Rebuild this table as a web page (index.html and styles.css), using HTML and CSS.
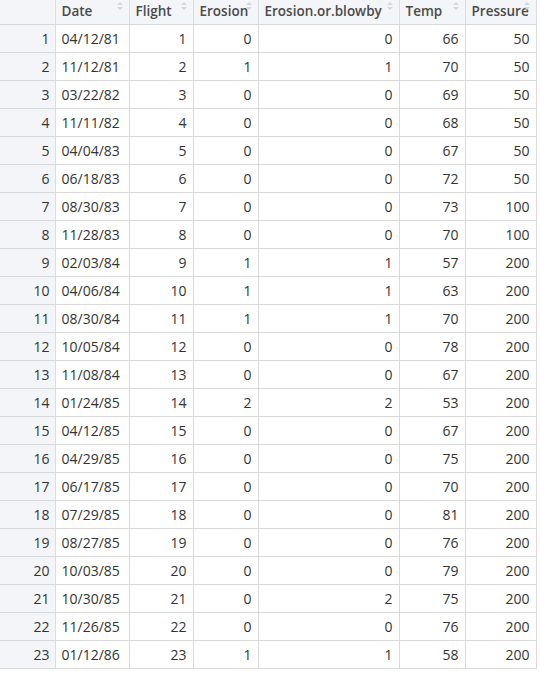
FILE: index.html
```html
<!DOCTYPE html>
<html>
<head>
<meta charset="utf-8">
<link rel="stylesheet" href="styles.css">
</head>
<body>
<table class="grid">
<colgroup>
<col class="c0"><col class="c1"><col class="c2"><col class="c3"><col class="c4"><col class="c5"><col class="c6">
</colgroup>
<thead>
<tr>
<th class="rh"></th>
<th><span class="lbl">Date</span><span class="sort"></span></th>
<th><span class="lbl">Flight</span><span class="sort"></span></th>
<th><span class="lbl">Erosion</span><span class="sort"></span></th>
<th><span class="lbl">Erosion.or.blowby</span><span class="sort"></span></th>
<th><span class="lbl">Temp</span><span class="sort"></span></th>
<th><span class="lbl">Pressure</span><span class="sort"></span></th>
</tr>
</thead>
<tbody id="body">
<tr><td class="rh">1</td><td class="l">04/12/81</td><td>1</td><td>0</td><td>0</td><td>66</td><td>50</td></tr>
<tr><td class="rh">2</td><td class="l">11/12/81</td><td>2</td><td>1</td><td>1</td><td>70</td><td>50</td></tr>
<tr><td class="rh">3</td><td class="l">03/22/82</td><td>3</td><td>0</td><td>0</td><td>69</td><td>50</td></tr>
<tr><td class="rh">4</td><td class="l">11/11/82</td><td>4</td><td>0</td><td>0</td><td>68</td><td>50</td></tr>
<tr><td class="rh">5</td><td class="l">04/04/83</td><td>5</td><td>0</td><td>0</td><td>67</td><td>50</td></tr>
<tr><td class="rh">6</td><td class="l">06/18/83</td><td>6</td><td>0</td><td>0</td><td>72</td><td>50</td></tr>
<tr><td class="rh">7</td><td class="l">08/30/83</td><td>7</td><td>0</td><td>0</td><td>73</td><td>100</td></tr>
<tr><td class="rh">8</td><td class="l">11/28/83</td><td>8</td><td>0</td><td>0</td><td>70</td><td>100</td></tr>
<tr><td class="rh">9</td><td class="l">02/03/84</td><td>9</td><td>1</td><td>1</td><td>57</td><td>200</td></tr>
<tr><td class="rh">10</td><td class="l">04/06/84</td><td>10</td><td>1</td><td>1</td><td>63</td><td>200</td></tr>
<tr><td class="rh">11</td><td class="l">08/30/84</td><td>11</td><td>1</td><td>1</td><td>70</td><td>200</td></tr>
<tr><td class="rh">12</td><td class="l">10/05/84</td><td>12</td><td>0</td><td>0</td><td>78</td><td>200</td></tr>
<tr><td class="rh">13</td><td class="l">11/08/84</td><td>13</td><td>0</td><td>0</td><td>67</td><td>200</td></tr>
<tr><td class="rh">14</td><td class="l">01/24/85</td><td>14</td><td>2</td><td>2</td><td>53</td><td>200</td></tr>
<tr><td class="rh">15</td><td class="l">04/12/85</td><td>15</td><td>0</td><td>0</td><td>67</td><td>200</td></tr>
<tr><td class="rh">16</td><td class="l">04/29/85</td><td>16</td><td>0</td><td>0</td><td>75</td><td>200</td></tr>
<tr><td class="rh">17</td><td class="l">06/17/85</td><td>17</td><td>0</td><td>0</td><td>70</td><td>200</td></tr>
<tr><td class="rh">18</td><td class="l">07/29/85</td><td>18</td><td>0</td><td>0</td><td>81</td><td>200</td></tr>
<tr><td class="rh">19</td><td class="l">08/27/85</td><td>19</td><td>0</td><td>0</td><td>76</td><td>200</td></tr>
<tr><td class="rh">20</td><td class="l">10/03/85</td><td>20</td><td>0</td><td>0</td><td>79</td><td>200</td></tr>
<tr><td class="rh">21</td><td class="l">10/30/85</td><td>21</td><td>0</td><td>2</td><td>75</td><td>200</td></tr>
<tr><td class="rh">22</td><td class="l">11/26/85</td><td>22</td><td>0</td><td>0</td><td>76</td><td>200</td></tr>
<tr><td class="rh">23</td><td class="l">01/12/86</td><td>23</td><td>1</td><td>1</td><td>58</td><td>200</td></tr>
</tbody>
</table>
</body>
</html>
```
FILE: styles.css
```css
html, body {
  margin: 0;
  padding: 0;
  background: #ffffff;
}
body {
  font-family: "Open Sans", "Noto Sans", sans-serif;
  font-size: 14px;
  color: #333333;
}
.grid {
  border-collapse: collapse;
  table-layout: fixed;
  width: 536px;
}
.c0 { width: 55px; }
.c1 { width: 74px; }
.c2 { width: 64px; }
.c3 { width: 65px; }
.c4 { width: 141px; }
.c5 { width: 66px; }
.c6 { width: 71px; }
.grid th {
  height: 24px;
  padding: 0 4px 3px 6px;
  background: #f3f5f8;
  border-right: 1px solid #dadde2;
  border-bottom: 1px solid #d4d7dc;
  text-align: left;
  font-size: 13.5px;
  font-weight: 600;
  color: #4a4a4a;
  position: relative;
  white-space: nowrap;
  overflow: visible;
  box-sizing: border-box;
}
.grid th.rh {
  border-right: 1px solid #dadde2;
}
.lbl {
  display: inline-block;
  vertical-align: middle;
}
.sort {
  position: absolute;
  right: 6px;
  top: 2px;
  width: 6px;
  height: 9px;
}
.sort::before, .sort::after {
  content: "";
  position: absolute;
  left: 0;
  border-left: 3px solid transparent;
  border-right: 3px solid transparent;
}
.sort::before {
  top: 0;
  border-bottom: 3px solid #d3d6db;
}
.sort::after {
  top: 5px;
  border-top: 3px solid #d3d6db;
}
.grid td {
  height: 27px;
  padding: 0 6px;
  border-right: 1px solid #d9d9d9;
  border-bottom: 1px solid #d9d9d9;
  text-align: right;
  white-space: nowrap;
}
.grid td.l {
  text-align: left;
}
.grid td.rh {
  background: #f3f5f8;
  border-right: 1px solid #dadde2;
  padding-right: 5px;
}
```
